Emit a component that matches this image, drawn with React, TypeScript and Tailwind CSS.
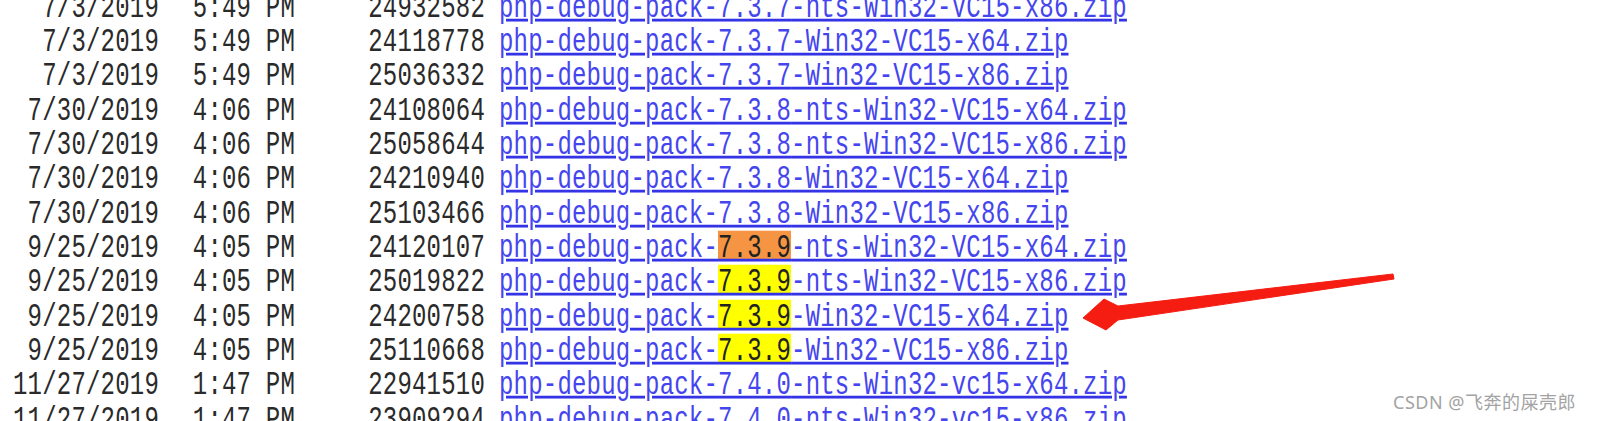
import React from "react";

type Row = {
  date: string;
  time: string;
  size: string;
  version: string;
  rest: string;
  mark?: "orange" | "yellow";
};

const rows: Row[] = [
  { date: "7/3/2019", time: "5:49 PM", size: "24932582", version: "7.3.7", rest: "-nts-Win32-VC15-x86.zip" },
  { date: "7/3/2019", time: "5:49 PM", size: "24118778", version: "7.3.7", rest: "-Win32-VC15-x64.zip" },
  { date: "7/3/2019", time: "5:49 PM", size: "25036332", version: "7.3.7", rest: "-Win32-VC15-x86.zip" },
  { date: "7/30/2019", time: "4:06 PM", size: "24108064", version: "7.3.8", rest: "-nts-Win32-VC15-x64.zip" },
  { date: "7/30/2019", time: "4:06 PM", size: "25058644", version: "7.3.8", rest: "-nts-Win32-VC15-x86.zip" },
  { date: "7/30/2019", time: "4:06 PM", size: "24210940", version: "7.3.8", rest: "-Win32-VC15-x64.zip" },
  { date: "7/30/2019", time: "4:06 PM", size: "25103466", version: "7.3.8", rest: "-Win32-VC15-x86.zip" },
  { date: "9/25/2019", time: "4:05 PM", size: "24120107", version: "7.3.9", rest: "-nts-Win32-VC15-x64.zip", mark: "orange" },
  { date: "9/25/2019", time: "4:05 PM", size: "25019822", version: "7.3.9", rest: "-nts-Win32-VC15-x86.zip", mark: "yellow" },
  { date: "9/25/2019", time: "4:05 PM", size: "24200758", version: "7.3.9", rest: "-Win32-VC15-x64.zip", mark: "yellow" },
  { date: "9/25/2019", time: "4:05 PM", size: "25110668", version: "7.3.9", rest: "-Win32-VC15-x86.zip", mark: "yellow" },
  { date: "11/27/2019", time: "1:47 PM", size: "22941510", version: "7.4.0", rest: "-nts-Win32-vc15-x64.zip" },
  { date: "11/27/2019", time: "1:47 PM", size: "23909294", version: "7.4.0", rest: "-nts-Win32-vc15-x86.zip" },
];

const Listing = ({ row }: { row: Row }) => {
  const markClass =
    row.mark === "orange"
      ? "inline-block bg-[#f59443] pt-[4.4px] leading-[17px] underline decoration-[#3434e6] underline-offset-[1px]"
      : row.mark === "yellow"
        ? "inline-block bg-[#ffff00] pt-[4.4px] leading-[17px] underline decoration-[#3434e6] underline-offset-[1px]"
        : "";

  return (
    <div className="flex h-[34.35px] shrink-0 scale-y-[1.4] items-center whitespace-pre">
      <span className="w-[159px] shrink-0 text-right text-[#2a2a2a]">{row.date}</span>
      <span className="w-[136px] shrink-0 text-right text-[#2a2a2a]">{row.time}</span>
      <span className="w-[190px] shrink-0 text-right text-[#2a2a2a]">{row.size}</span>
      <a
        href="#"
        className="ml-[14px] text-[#4545ee] underline decoration-[#3434e6] underline-offset-[1px]"
      >
        php-debug-pack-
        {row.mark ? (
          <span className={`${markClass} text-[#222222]`}>{row.version}</span>
        ) : (
          row.version
        )}
        {row.rest}
      </a>
    </div>
  );
};

export default function App() {
  return (
    <div className="relative h-[421px] w-[1599px] overflow-hidden bg-white">
      {/* directory listing */}
      <div className="-mt-[8.4px] flex flex-col font-['Liberation_Mono',monospace] text-[24px] tracking-[0.2px]">
        {rows.map((row) => (
          <Listing key={row.size} row={row} />
        ))}
      </div>

      {/* red annotation arrow */}
      <svg
        className="absolute left-0 top-0"
        width="1599"
        height="421"
        viewBox="0 0 1599 421"
      >
        <path
          d="M1393 274 L1118 306 L1104 299 L1083 318 L1106 330 L1118 320 L1394 279 Z"
          fill="#f51c12"
          stroke="#f51c12"
          strokeWidth="1"
          strokeLinejoin="round"
        />
      </svg>

      {/* watermark */}
      <div className="absolute left-[1393px] top-[390px] font-['Noto_Sans','Noto_Sans_CJK_SC',sans-serif] text-[18px] leading-[24px] tracking-[0.5px] text-[#a3a3a3]">
        CSDN @飞奔的屎壳郎
      </div>
    </div>
  );
}
